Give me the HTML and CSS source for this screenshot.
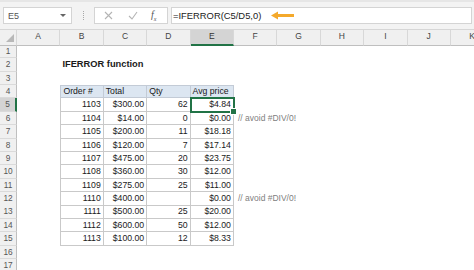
FILE: index.html
```html
<!DOCTYPE html>
<html lang="en">
<head>
  <meta charset="UTF-8" />
  <title>IFERROR function</title>
  <meta name="viewport" content="width=device-width, initial-scale=1.0" />
  <link rel="stylesheet" href="styles.css">
</head>
<body>
  <div class="toolbar">
    <div class="name-box">
      <span>E5</span>
      <span class="caret"></span>
    </div>
    <div class="grip"></div>
    <div class="fx-box">
      <svg class="icon" width="9" height="9" viewBox="0 0 9 9">
        <path d="M1 1 L8 8 M8 1 L1 8" stroke="#b4b4b4" stroke-width="1.1" fill="none" />
      </svg>
      <svg class="icon" width="10" height="9" viewBox="0 0 10 9">
        <path d="M1 5 L4 8 L9 1" stroke="#b4b4b4" stroke-width="1.1" fill="none" />
      </svg>
      <span class="fx">f<sub>x</sub></span>
    </div>
    <div class="formula">
      <span>=IFERROR(C5/D5,0)</span>
      <svg class="arrow" width="23" height="9" viewBox="0 0 23 9">
        <path d="M0 4.5 L7 0.5 L7 3 L23 3 L23 6 L7 6 L7 8.5 Z" fill="#f4a92b" />
      </svg>
    </div>
  </div>

  <div class="sheet">
    <div class="row head">
      <div class="corner"><span class="tri"></span></div>
      <div>A</div><div>B</div><div>C</div><div>D</div><div class="on">E</div>
      <div>F</div><div>G</div><div>H</div><div>I</div><div>J</div><div>K</div>
    </div>

    <div class="row"><div class="rh">1</div></div>
    <div class="row"><div class="rh">2</div><div></div><div class="title">IFERROR function</div></div>
    <div class="row"><div class="rh">3</div></div>

    <div class="row">
      <div class="rh">4</div><div></div>
      <div class="c th first">Order #</div><div class="c th">Total</div><div class="c th">Qty</div><div class="c th">Avg price</div>
    </div>
    <div class="row">
      <div class="rh on">5</div><div></div>
      <div class="c first">1103</div><div class="c">$300.00</div><div class="c">62</div><div class="c sel">$4.84</div>
    </div>
    <div class="row">
      <div class="rh">6</div><div></div>
      <div class="c first">1104</div><div class="c">$14.00</div><div class="c">0</div><div class="c">$0.00</div>
      <div class="note">// avoid #DIV/0!</div>
    </div>
    <div class="row">
      <div class="rh">7</div><div></div>
      <div class="c first">1105</div><div class="c">$200.00</div><div class="c">11</div><div class="c">$18.18</div>
    </div>
    <div class="row">
      <div class="rh">8</div><div></div>
      <div class="c first">1106</div><div class="c">$120.00</div><div class="c">7</div><div class="c">$17.14</div>
    </div>
    <div class="row">
      <div class="rh">9</div><div></div>
      <div class="c first">1107</div><div class="c">$475.00</div><div class="c">20</div><div class="c">$23.75</div>
    </div>
    <div class="row">
      <div class="rh">10</div><div></div>
      <div class="c first">1108</div><div class="c">$360.00</div><div class="c">30</div><div class="c">$12.00</div>
    </div>
    <div class="row">
      <div class="rh">11</div><div></div>
      <div class="c first">1109</div><div class="c">$275.00</div><div class="c">25</div><div class="c">$11.00</div>
    </div>
    <div class="row">
      <div class="rh">12</div><div></div>
      <div class="c first">1110</div><div class="c">$400.00</div><div class="c"></div><div class="c">$0.00</div>
      <div class="note">// avoid #DIV/0!</div>
    </div>
    <div class="row">
      <div class="rh">13</div><div></div>
      <div class="c first">1111</div><div class="c">$500.00</div><div class="c">25</div><div class="c">$20.00</div>
    </div>
    <div class="row">
      <div class="rh">14</div><div></div>
      <div class="c first">1112</div><div class="c">$600.00</div><div class="c">50</div><div class="c">$12.00</div>
    </div>
    <div class="row">
      <div class="rh">15</div><div></div>
      <div class="c first">1113</div><div class="c">$100.00</div><div class="c">12</div><div class="c">$8.33</div>
    </div>

    <div class="row"><div class="rh">16</div></div>
    <div class="row"><div class="rh">17</div></div>
  </div>
</body>
</html>
```

FILE: styles.css
```css
* {
  box-sizing: border-box;
}

html, body {
  margin: 0;
  padding: 0;
  width: 100%;
  height: 100%;
  background: #fff;
  font-family: 'Liberation Sans', Arial, sans-serif;
  overflow: hidden;
}

/* formula bar */

.toolbar {
  height: 30px;
  background: #f3f3f3;
  border-top: 2px solid #e6e6e6;
  border-bottom: 1px solid #d6d6d6;
  display: flex;
  align-items: center;
  padding: 0 0 0 3px;
}

.name-box {
  width: 69px;
  height: 17px;
  background: #fff;
  border: 1px solid #d4d4d4;
  display: flex;
  align-items: center;
  justify-content: space-between;
  padding: 0 5px 0 4px;
  font-size: 9px;
  color: #555;
}

.caret {
  width: 0;
  height: 0;
  border-left: 3px solid transparent;
  border-right: 3px solid transparent;
  border-top: 3px solid #666;
}

.grip {
  width: 1px;
  height: 9px;
  margin: 0 10px 0 11px;
  border-left: 1px dotted #a8a8a8;
}

.fx-box {
  width: 74px;
  height: 17px;
  background: #fff;
  border: 1px solid #d4d4d4;
  display: flex;
  align-items: center;
  padding: 0 0 0 9px;
  gap: 15px;
}

.icon {
  display: block;
}

.fx {
  font-family: 'Liberation Serif', serif;
  font-style: italic;
  font-size: 10px;
  color: #555;
  margin-left: -2px;
}

.fx sub {
  font-size: 6px;
}

.formula {
  flex: 1;
  height: 17px;
  margin: 0 2px 0 3px;
  background: #fff;
  border: 1px solid #d4d4d4;
  display: flex;
  align-items: center;
  gap: 10px;
  padding-left: 1px;
  font-size: 9.4px;
  color: #222;
}

.arrow {
  display: block;
}

/* sheet grid */

.sheet {
  display: flex;
  flex-direction: column;
}

.row {
  display: grid;
  grid-template-columns: 17px repeat(11, 43.4px);
  height: 13.4px;
  font-size: 8.7px;
  line-height: 12.4px;
  color: #1a1a1a;
}

.row > div {
  white-space: nowrap;
}

.row.head {
  height: 14.8px;
  background: #f0f0f0;
  color: #444;
  font-size: 8.5px;
  line-height: 13.8px;
}

.row.head > div {
  text-align: center;
  border-right: 1px solid #d8d8d8;
  border-bottom: 1px solid #bfbfbf;
}

.row.head > .on {
  background: #d4d4d4;
  border-bottom: 2px solid #217346;
  color: #333;
}

.corner {
  position: relative;
}

.tri {
  position: absolute;
  right: 2px;
  bottom: 3px;
  width: 0;
  height: 0;
  border-left: 8px solid transparent;
  border-bottom: 8px solid #b8b8b8;
}

.rh {
  background: #f0f0f0;
  border-right: 1px solid #bfbfbf;
  border-bottom: 1px solid #dadada;
  color: #555;
  font-size: 8.3px;
  text-align: center;
}

.rh.on {
  background: #d4d4d4;
  border-right: 2px solid #217346;
}

.title {
  font-weight: bold;
  font-size: 9.3px;
  padding-left: 2px;
}

/* data table */

.c {
  border-right: 1px solid #c9c9c9;
  border-bottom: 1px solid #c9c9c9;
  text-align: right;
  padding-right: 2px;
}

.c.first {
  border-left: 1px solid #c9c9c9;
}

.c.th {
  background: #dce6f1;
  border-top: 1px solid #c3cbd6;
  border-bottom-color: #c3cbd6;
  border-right-color: #c3cbd6;
  text-align: left;
  padding: 0 0 0 2px;
  line-height: 11.4px;
}

.c.th.first {
  border-left-color: #c3cbd6;
}

.c.sel {
  position: relative;
  outline: 2px solid #217346;
  outline-offset: -1px;
  z-index: 1;
}

.c.sel::after {
  content: "";
  position: absolute;
  right: -4px;
  bottom: -4px;
  width: 5px;
  height: 5px;
  background: #217346;
  border: 1px solid #fff;
}

.note {
  color: #808080;
  font-size: 8.5px;
  padding-left: 4px;
}
```
